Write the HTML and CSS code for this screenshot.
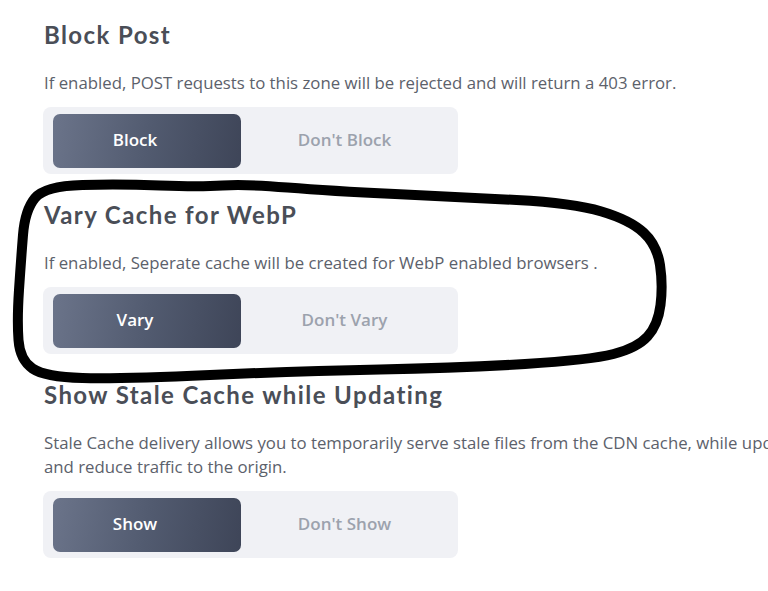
FILE: index.html
```html
<!DOCTYPE html>
<html lang="en">
<head>
<meta charset="utf-8">
<title>Zone settings</title>
<link rel="stylesheet" href="styles.css">
</head>
<body>
<main class="page">
  <section class="setting">
    <h2 class="setting-title">Block Post</h2>
    <p class="setting-desc">If enabled, POST requests to this zone will be rejected and will return a 403 error.</p>
    <div class="toggle">
      <button class="toggle-opt is-active" type="button">Block</button>
      <button class="toggle-opt" type="button">Don't Block</button>
    </div>
  </section>
  <section class="setting">
    <h2 class="setting-title">Vary Cache for WebP</h2>
    <p class="setting-desc">If enabled, Seperate cache will be created for WebP enabled browsers .</p>
    <div class="toggle">
      <button class="toggle-opt is-active" type="button">Vary</button>
      <button class="toggle-opt" type="button">Don't Vary</button>
    </div>
  </section>
  <section class="setting">
    <h2 class="setting-title">Show Stale Cache while Updating</h2>
    <p class="setting-desc">Stale Cache delivery allows you to temporarily serve stale files from the CDN cache, while updating the origin, to speed up delivery<br>and reduce traffic to the origin.</p>
    <div class="toggle">
      <button class="toggle-opt is-active" type="button">Show</button>
      <button class="toggle-opt" type="button">Don't Show</button>
    </div>
  </section>
  <svg class="annotation" viewBox="0 0 768 591" width="768" height="591" aria-hidden="true">
    <path d="M 82.5 185 Q 120 184 160 185.5 Q 200 187 222.5 185.5 Q 245 184 287.5 187.5 Q 330 191 395 194 Q 460 197 516.5 200 Q 573 203 601.5 211.5 Q 630 220 643.5 232.5 Q 657 245 660 265 Q 663 285 660.5 305 Q 658 325 647.5 336.5 Q 637 348 613.5 354 Q 590 360 525 364 Q 460 368 380 369.5 Q 300 371 210 375 Q 120 379 82.5 378 Q 45 377 32.5 368.5 Q 20 360 18.5 340 Q 17 320 19 290 Q 21 260 23 235 Q 25 210 35 198 Q 45 186 82.5 185 Z" fill="none" stroke="#000" stroke-width="10" stroke-linecap="round" stroke-linejoin="round"/>
  </svg>
</main>
</body>
</html>
```

FILE: styles.css
```css
html, body {
  margin: 0;
  padding: 0;
  background: #ffffff;
}

.page {
  position: relative;
  width: 768px;
  height: 591px;
  overflow: hidden;
  padding: 21px 0 0 43px;
  box-sizing: border-box;
  font-family: "Open Sans", "Noto Sans", sans-serif;
}

.setting {
  margin-bottom: 27px;
}

.setting-title {
  margin: 0 0 0 1px;
  font-family: Lato, "Noto Sans", sans-serif;
  font-weight: 700;
  font-size: 24px;
  line-height: 28px;
  letter-spacing: 1.4px;
  color: #4a4e57;
}

.setting-desc {
  margin: 22px 0 12px 1px;
  font-size: 16.8px;
  line-height: 24px;
  color: #5c616b;
  white-space: nowrap;
}

.toggle {
  display: flex;
  width: 415px;
  box-sizing: border-box;
  padding: 7px 10px 6px;
  background: #f0f1f5;
  border-radius: 8px;
}

.toggle-opt {
  height: 54px;
  border: 0;
  border-radius: 7px;
  background: transparent;
  font-family: "Open Sans", "Noto Sans", sans-serif;
  font-weight: 600;
  font-size: 17px;
  color: #9ca2ad;
  padding: 0 0 3px;
  cursor: pointer;
}

.toggle-opt:not(.is-active) {
  flex: 1;
}

.toggle-opt.is-active {
  width: 188px;
  flex: none;
  padding-right: 24px;
  color: #ffffff;
  background: linear-gradient(100deg, #6b748a 0%, #525b70 50%, #3e4558 100%);
}

.annotation {
  position: absolute;
  left: 0;
  top: 0;
  pointer-events: none;
}
```
